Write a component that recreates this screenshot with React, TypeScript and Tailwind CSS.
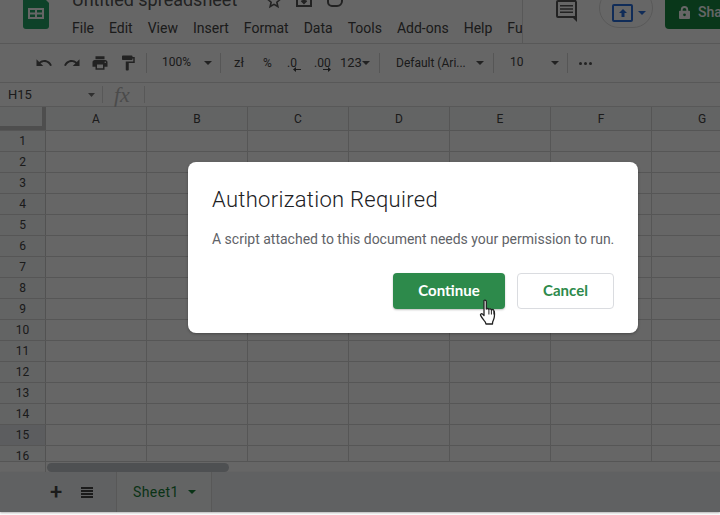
import React from "react";

const cols = ["A", "B", "C", "D", "E", "F", "G"];
const rows = Array.from({ length: 16 }, (_, i) => i + 1);
const menus = ["File", "Edit", "View", "Insert", "Format", "Data", "Tools", "Add-ons", "Help", "Fu"];

const Caret = ({ c = "#555" }: { c?: string }) => (
  <svg width="8" height="4" viewBox="0 0 8 4" className="shrink-0"><path d="M0 0h8L4 4z" fill={c} /></svg>
);
const Sep = () => <div className="w-px h-[20px] bg-[#d6d6d6] shrink-0" />;

function Icon({ d, w = 18 }: { d: string; w?: number }) {
  return (
    <svg width={w} height={w} viewBox="0 0 24 24" fill="#555" className="shrink-0"><path d={d} /></svg>
  );
}

export default function App() {
  return (
    <div className="relative w-[720px] h-[515px] overflow-hidden bg-white font-['Roboto',sans-serif] text-[#444]">
      {/* header */}
      <div className="h-[44px] flex border-b border-[#ddd] bg-white">
        <div className="w-[522px] flex shrink-0 overflow-hidden">
          <div className="pl-[23px] pr-[23px] shrink-0">
            <svg width="26" height="29" viewBox="0 0 26 29">
              <path d="M0 0H23L26 3V26a3 3 0 0 1-3 3H3a3 3 0 0 1-3-3z" fill="#23a566" />
              <path d="M5 8h16v11H5z" fill="#fff" />
              <path d="M7 10h5v2.5H7zM14 10h5v2.5h-5zM7 14.5h5V17H7zM14 14.5h5V17h-5z" fill="#23a566" />
            </svg>
          </div>
          <div className="flex flex-col">
            <div className="mt-[-11px] h-[22px] text-[18px] leading-[22px] text-[#555] flex items-center whitespace-nowrap">
              <span className="w-[194px] shrink-0">Untitled spreadsheet</span>
              <svg width="16" height="16" viewBox="0 0 24 24" fill="none" stroke="#555" strokeWidth="2.4" className="shrink-0 mt-[2px]">
                <path d="M12 3l2.7 6 6.5.6-4.9 4.3 1.5 6.4L12 17l-5.8 3.3 1.5-6.4-4.9-4.3 6.5-.6z" />
              </svg>
              <span className="w-[14px] shrink-0" />
              <svg width="16" height="14" viewBox="0 0 16 14" fill="none" stroke="#555" strokeWidth="2" className="shrink-0">
                <path d="M1 1h14v12H1zM8 4v6M5.5 7.5 8 10l2.5-2.5" />
              </svg>
              <span className="w-[15px] shrink-0" />
              <svg width="16" height="14" viewBox="0 0 16 14" fill="none" stroke="#555" strokeWidth="2" className="shrink-0">
                <path d="M4 2h8a3 3 0 0 1 3 3v3a5 5 0 0 1-5 5H5a4 4 0 0 1-4-4V2" />
              </svg>
            </div>
            <div className="mt-[7px] flex text-[14px] leading-[20px] whitespace-nowrap">
              {menus.map((m) => (
                <span key={m} className="mr-[15px]">{m}</span>
              ))}
            </div>
          </div>
        </div>
        <div className="flex-1 relative border-l border-[#ddd] bg-white flex items-start pl-[32px] overflow-hidden">
          <svg width="24" height="24" viewBox="0 0 24 24" fill="#555" className="shrink-0">
            <path d="M21 0H3a2 2 0 0 0-2 2v14a2 2 0 0 0 2 2h15l4 4V2zM20 16H3V2h17zM5 5h13v1.6H5zM5 8.2h13v1.6H5zM5 11.4h13V13H5z" fillRule="evenodd" />
          </svg>
          <div className="ml-[20px] mt-[-12px] w-[54px] h-[40px] rounded-full border border-[#ddd] shrink-0 flex items-center gap-[5px] pl-[12px] pt-[10px]">
            <div className="w-[21px] h-[18px] border-2 border-[#2a6fdb] rounded-[2px] flex items-center justify-center shrink-0">
              <svg width="10" height="10" viewBox="0 0 10 10"><path d="M5 1 1 5h2.5v4h3V5H9z" fill="#2a6fdb" /></svg>
            </div>
            <Caret c="#2a6fdb" />
          </div>
          <div className="ml-[12px] mt-[-5px] w-[70px] h-[34px] rounded-[4px] bg-[#188a42] flex items-center pl-[14px] gap-[8px] text-white text-[14px] font-medium shrink-0">
            <svg width="11" height="13" viewBox="0 0 12 14" fill="#fff" className="shrink-0"><path d="M2 5V4a4 4 0 0 1 8 0v1h1a1 1 0 0 1 1 1v7a1 1 0 0 1-1 1H1a1 1 0 0 1-1-1V6a1 1 0 0 1 1-1zm2 0h4V4a2 2 0 0 0-4 0zm2 3a1.5 1.5 0 1 0 0 3 1.5 1.5 0 0 0 0-3z" fillRule="evenodd" /></svg>
            <span>Share</span>
          </div>
        </div>
      </div>

      {/* toolbar */}
      <div className="h-[39px] flex items-center border-b border-[#ddd] pl-[35px] text-[12px] whitespace-nowrap">
        <div className="w-[28px] shrink-0"><Icon d="M12.5 8c-2.65 0-5.05 1-6.9 2.6L2 7v9h9l-3.62-3.62c1.39-1.16 3.16-1.88 5.12-1.88 3.54 0 6.55 2.31 7.6 5.5l2.37-.78C21.08 11.03 17.15 8 12.5 8z" /></div>
        <div className="w-[28px] shrink-0"><Icon d="M18.4 10.6C16.55 9 14.15 8 11.5 8c-4.65 0-8.58 3.03-9.96 7.22L3.9 16c1.05-3.19 4.05-5.5 7.6-5.5 1.95 0 3.73.72 5.12 1.88L13 16h9V7z" /></div>
        <div className="w-[28px] shrink-0"><Icon d="M19 8H5c-1.66 0-3 1.34-3 3v6h4v4h12v-4h4v-6c0-1.66-1.34-3-3-3zm-3 11H8v-5h8v5zm3-7a1 1 0 1 1 0-2 1 1 0 0 1 0 2zM18 3H6v4h12z" /></div>
        <div className="w-[27px] shrink-0"><Icon d="M18 4V3c0-.55-.45-1-1-1H5c-.55 0-1 .45-1 1v4c0 .55.45 1 1 1h12c.55 0 1-.45 1-1V6h1v4H9v11c0 .55.45 1 1 1h2c.55 0 1-.45 1-1v-9h8V4h-3z" /></div>
        <Sep />
        <span className="ml-[15px] w-[42px] shrink-0 mt-[-2px]">100%</span>
        <Caret />
        <span className="w-[8px] shrink-0" />
        <Sep />
        <span className="ml-[13px] w-[29px] shrink-0 text-[13px]">zł</span>
        <span className="w-[24px] shrink-0">%</span>
        <span className="w-[27px] shrink-0 relative">
          .0
          <svg width="8" height="5" viewBox="0 0 8 5" className="absolute left-[6px] top-[13px]"><path d="M0 2.5 3 0v2h5v1H3v2z" fill="#444" /></svg>
        </span>
        <span className="w-[26px] shrink-0 relative">
          .00
          <svg width="8" height="5" viewBox="0 0 8 5" className="absolute left-[9px] top-[13px]"><path d="M8 2.5 5 0v2H0v1h5v2z" fill="#444" /></svg>
        </span>
        <span className="w-[22px] shrink-0 text-[13px]">123</span>
        <Caret />
        <span className="w-[9px] shrink-0" />
        <Sep />
        <span className="ml-[16px] w-[80px] shrink-0">Default (Ari...</span>
        <Caret />
        <span className="w-[9px] shrink-0" />
        <Sep />
        <span className="ml-[16px] w-[41px] shrink-0 mt-[-2px]">10</span>
        <Caret />
        <span className="w-[8px] shrink-0" />
        <Sep />
        <span className="ml-[11px] flex gap-[2px]">
          <i className="block w-[3px] h-[3px] rounded-full bg-[#555]" />
          <i className="block w-[3px] h-[3px] rounded-full bg-[#555]" />
          <i className="block w-[3px] h-[3px] rounded-full bg-[#555]" />
        </span>
      </div>

      {/* formula bar */}
      <div className="h-[24px] flex items-center border-b border-[#ddd] text-[13px]">
        <span className="pl-[8px] w-[88px]">H15</span>
        <svg width="7" height="4" viewBox="0 0 7 4" className="shrink-0"><path d="M0 0h7L3.5 4z" fill="#777" /></svg>
        <span className="w-[7px]" />
        <div className="w-px h-[17px] bg-[#ddd]" />
        <span className="w-[41px] px-[11px] font-['Liberation_Serif',serif] italic text-[22px] leading-none text-[#bbb]">fx</span>
        <div className="w-px h-[17px] bg-[#ddd]" />
      </div>

      {/* grid */}
      <div className="h-[354px] overflow-hidden">
        <div className="flex h-[24px] border-b border-[#d4d4d4] bg-[#f8f9fa] text-[12px]">
          <div className="w-[46px] shrink-0 bg-[#f8f9fa] border-r-[4px] border-b-[4px] border-[#c4c4c4]" />
          {cols.map((c) => (
            <div key={c} className="w-[101px] shrink-0 border-r border-[#d4d4d4] flex items-center justify-center">{c}</div>
          ))}
        </div>
        {rows.map((r) => (
          <div key={r} className="flex h-[21px] border-b border-[#d8d8d8]">
            <div className={`w-[46px] shrink-0 border-r border-[#ccc] text-[12px] flex items-center justify-center ${r === 15 ? "bg-[#e6e9ee]" : "bg-[#f8f9fa]"}`}>{r}</div>
            {cols.map((c) => (
              <div key={c} className="w-[101px] shrink-0 border-r border-[#d8d8d8]" />
            ))}
          </div>
        ))}
      </div>

      {/* scrollbar */}
      <div className="h-[11px] flex items-center bg-white border-t border-[#d4d4d4]">
        <div className="w-[46px] h-full border-r border-[#d4d4d4] shrink-0" />
        <div className="w-[182px] h-[9px] ml-px rounded-full bg-[#c4c7cc]" />
      </div>

      {/* tab bar */}
      <div className="h-[40px] flex bg-[#f1f3f4] shadow-[0_1px_2px_rgba(0,0,0,0.3)]">
        <div className="w-[116px] flex items-center pl-[50px] gap-[19px] shrink-0">
          <span className="text-[22px] leading-none font-medium w-[12px] text-center">+</span>
          <div className="w-[12px] flex flex-col gap-[1px]">
            {[0, 1, 2, 3].map((i) => <div key={i} className="h-[2px] bg-[#444]" />)}
          </div>
        </div>
        <div className="w-[96px] flex items-center pl-[16px] gap-[9px] bg-[#f8f9fa] border-x border-[#ddd] text-[#188038] text-[14px] tracking-[0.4px]">
          <span>Sheet1</span>
          <Caret c="#188038" />
        </div>
      </div>

      {/* backdrop */}
      <div className="absolute inset-x-0 top-0 h-[512px] bg-black/60" />

      {/* dialog */}
      <div className="absolute left-[188px] top-[162px] w-[450px] h-[171px] bg-white rounded-[8px] pt-[23px] px-[24px] shadow-[0_1px_3px_rgba(0,0,0,0.3)]">
        <h1 className="text-[22px] leading-[30px] text-[#202124] font-light tracking-[0.3px] whitespace-nowrap">Authorization Required</h1>
        <p className="mt-[14px] text-[14px] leading-[20px] text-[#5f6368] whitespace-nowrap">A script attached to this document needs your permission to run.</p>
        <div className="mt-[24px] flex justify-end gap-[12px] font-['Lato',sans-serif]">
          <button className="w-[112px] h-[36px] pb-[2px] rounded-[4px] bg-[#2d8a4b] text-white text-[15px] font-bold shadow-[0_1px_2px_rgba(0,0,0,0.25)]">Continue</button>
          <button className="w-[97px] h-[36px] pb-[2px] rounded-[4px] bg-white border border-[#dadce0] text-[#2d8a4b] text-[15px] font-bold">Cancel</button>
        </div>
      </div>

      {/* cursor */}
      <svg className="absolute left-[479px] top-[299px]" width="20" height="27" viewBox="0 0 20 27">
        <path d="M5 1.5c1-.8 2.3 0 2.3 1.2V10c.8-.6 2-.4 2.6.3.8-.5 2-.3 2.5.5.8-.4 2-.2 2.5.7.6 1 .7 4 .4 6.5-.2 2-1 3.3-1.5 4.5-.3.8-.3 2-.3 2.5H7c-.3-1.2-.9-2.4-2-3.6-1.2-1.4-2.8-3.8-3.4-5-.6-1.2.8-2.2 1.9-1.3l1.5 1.5z" fill="#fff" stroke="#222" strokeWidth="1.3" strokeLinejoin="round" />
        <path d="M9.9 10.5v5M12.4 11v4.5M14.9 12v3.5" stroke="#222" strokeWidth="1" fill="none" />
      </svg>
    </div>
  );
}
